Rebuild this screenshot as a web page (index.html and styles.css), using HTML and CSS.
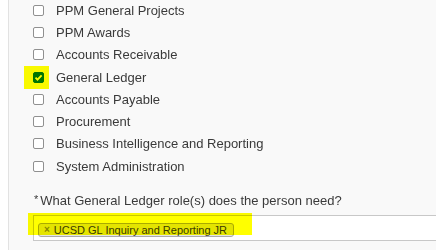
FILE: index.html
```html
<!DOCTYPE html>
<html>

<head>
    <link rel="stylesheet" href="styles.css">
</head>

<body>
    <div class="panel">
        <ul class="options">
            <li class="opt"><span class="box"></span><span>PPM General Projects</span></li>
            <li class="opt"><span class="box"></span><span>PPM Awards</span></li>
            <li class="opt"><span class="box"></span><span>Accounts Receivable</span></li>
            <li class="opt">
                <span class="box checked">
                    <svg width="11" height="11" viewBox="0 0 11 11"><path d="M2.5 5.6 L4.5 7.6 L8.6 3.3" fill="none" stroke="#fff" stroke-width="1.8"/></svg>
                    <i class="marker mark-box"></i>
                </span>
                <span>General Ledger</span>
            </li>
            <li class="opt"><span class="box"></span><span>Accounts Payable</span></li>
            <li class="opt"><span class="box"></span><span>Procurement</span></li>
            <li class="opt"><span class="box"></span><span>Business Intelligence and Reporting</span></li>
            <li class="opt"><span class="box"></span><span>System Administration</span></li>
        </ul>

        <div class="question">
            <label class="q-label"><sup>*</sup>What General Ledger role(s) does the person need?</label>
            <div class="select">
                <span class="tag"><span class="tag-x">&times;</span>UCSD GL Inquiry and Reporting JR</span>
                <i class="marker mark-tag"></i>
            </div>
        </div>
    </div>
</body>

</html>
```

FILE: styles.css
```css
* {
    padding: 0;
    margin: 0;
    box-sizing: border-box;
}

body {
    background: #fff;
    font-family: "Liberation Sans", Arial, sans-serif;
    color: #3a3a3a;
    overflow: hidden;
    width: 436px;
    height: 250px;
}

.panel {
    margin-left: 8px;
    height: 250px;
    border-left: 1px solid #e2e2e2;
    background: #f9f9f9;
    padding-left: 24px;
    overflow: hidden;
}

.options {
    list-style: none;
    margin-top: -1px;
}

.opt {
    display: flex;
    align-items: center;
    height: 22.3px;
    font-size: 13px;
    gap: 12px;
}

.box {
    position: relative;
    width: 11px;
    height: 11px;
    border: 1px solid #909090;
    border-radius: 2px;
    background: #fff;
    flex: none;
}

.box.checked {
    background: #0075ff;
    border-color: #0075ff;
}

.box svg {
    position: absolute;
    left: -1px;
    top: -1px;
}

/* yellow highlighter over the screenshot */
.marker {
    position: absolute;
    background: #ffff00;
    mix-blend-mode: multiply;
}

.mark-box {
    left: -10px;
    top: -7px;
    width: 25px;
    height: 23px;
}

.question {
    margin-top: 16px;
}

.q-label {
    display: block;
    font-size: 13px;
    line-height: 16px;
    padding-left: 1px;
}

.q-label sup {
    font-size: 11px;
    vertical-align: 2px;
    line-height: 0;
    margin-right: 2px;
}

.select {
    position: relative;
    margin-top: 6px;
    width: 420px;
    height: 26px;
    border: 1px solid #c8c8c8;
    background: #fff;
    padding: 3px 4px;
}

.tag {
    display: inline-flex;
    align-items: center;
    height: 14px;
    width: 196px;
    border: 1px solid #aaa;
    border-radius: 3px;
    background: #e4e4e4;
    font-size: 11px;
    padding: 0 4px 0 5px;
    white-space: nowrap;
}

.tag-x {
    color: #888;
    font-weight: bold;
    font-size: 10px;
    margin-right: 4px;
}

.mark-tag {
    left: -6px;
    top: -3px;
    width: 224px;
    height: 22px;
}
```
